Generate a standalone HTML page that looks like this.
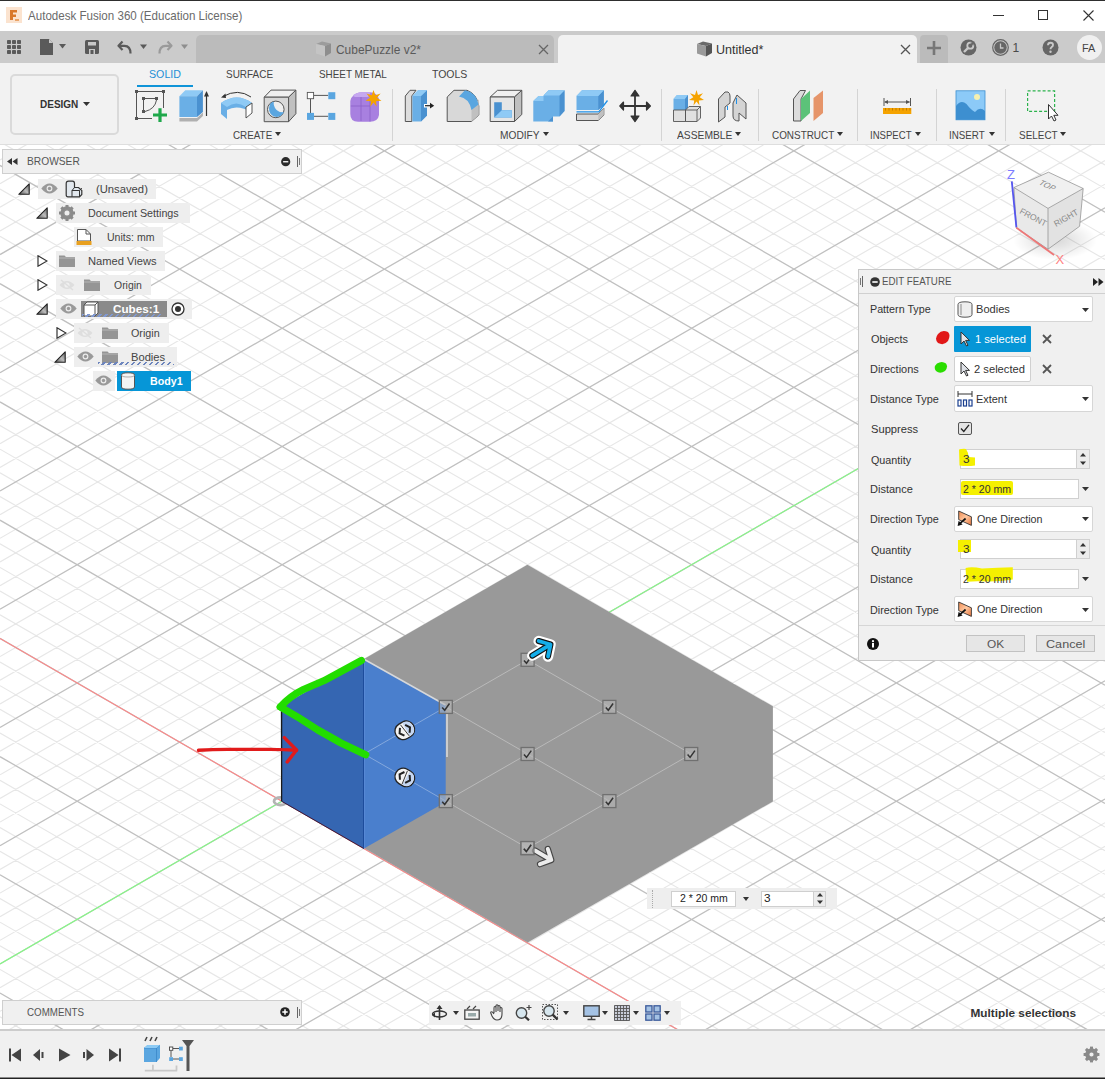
<!DOCTYPE html><html><head><meta charset="utf-8"><style>
*{box-sizing:border-box;margin:0;padding:0}
html,body{width:1105px;height:1079px;overflow:hidden;background:#fff;font-family:"Liberation Sans",sans-serif;color:#333}
.a{position:absolute}
#title{left:0;top:0;width:1105px;height:31px;background:#fff;border-top:1px solid #2b2b2b}
#tabbar{left:0;top:31px;width:1105px;height:32px;background:#c9c9c9}
#toolbar{left:0;top:63px;width:1105px;height:81px;background:#f2f2f2;border-bottom:1px solid #dcdcdc}
#vp{left:0;top:0;width:1105px;height:1079px}
#timeline{left:0;top:1029px;width:1105px;height:50px;background:#f0f0f0;border-top:2px solid #cfcfcf;border-bottom:2px solid #3a3a3a}
.txt{white-space:nowrap;line-height:1}
</style></head><body>
<svg class="a" style="left:0;top:0" width="1105" height="1079" viewBox="0 0 1105 1079"><rect x="0" y="144" width="1105" height="886" fill="#fff"/><path d="M0 112.68L1105 -525.28M0 159.98L1105 -477.99M0 183.63L1105 -454.34M0 207.27L1105 -430.69M0 230.92L1105 -407.04M0 278.22L1105 -359.75M0 301.87L1105 -336.10M0 325.51L1105 -312.45M0 349.16L1105 -288.80M0 396.46L1105 -241.51M0 420.11L1105 -217.86M0 443.75L1105 -194.21M0 467.40L1105 -170.56M0 514.70L1105 -123.27M0 538.35L1105 -99.62M0 561.99L1105 -75.97M0 585.64L1105 -52.32M0 632.94L1105 -5.03M0 656.59L1105 18.62M0 680.23L1105 42.27M0 703.88L1105 65.92M0 751.18L1105 113.21M0 774.83L1105 136.86M0 798.47L1105 160.51M0 822.12L1105 184.16M0 869.42L1105 231.45M0 893.07L1105 255.10M0 916.71L1105 278.75M0 940.36L1105 302.40M0 987.66L1105 349.69M0 1011.31L1105 373.34M0 1034.95L1105 396.99M0 1058.60L1105 420.64M0 1105.90L1105 467.93M0 1129.55L1105 491.58M0 1153.19L1105 515.23M0 1176.84L1105 538.88M0 1224.14L1105 586.17M0 1247.79L1105 609.82M0 1271.43L1105 633.47M0 1295.08L1105 657.12M0 1342.38L1105 704.41M0 1366.03L1105 728.06M0 1389.67L1105 751.71M0 1413.32L1105 775.36M0 1460.62L1105 822.65M0 1484.27L1105 846.30M0 1507.91L1105 869.95M0 1531.56L1105 893.60M0 1578.86L1105 940.89M0 1602.51L1105 964.54M0 1626.15L1105 988.19M0 1649.80L1105 1011.84M0 1697.10L1105 1059.13M0 -520.36L1105 117.60M0 -496.71L1105 141.25M0 -473.07L1105 164.90M0 -449.42L1105 188.55M0 -402.12L1105 235.84M0 -378.47L1105 259.49M0 -354.83L1105 283.14M0 -331.18L1105 306.79M0 -283.88L1105 354.08M0 -260.23L1105 377.73M0 -236.59L1105 401.38M0 -212.94L1105 425.03M0 -165.64L1105 472.32M0 -141.99L1105 495.97M0 -118.35L1105 519.62M0 -94.70L1105 543.27M0 -47.40L1105 590.56M0 -23.75L1105 614.21M0 -0.11L1105 637.86M0 23.54L1105 661.51M0 70.84L1105 708.80M0 94.49L1105 732.45M0 118.13L1105 756.10M0 141.78L1105 779.75M0 189.08L1105 827.04M0 212.73L1105 850.69M0 236.37L1105 874.34M0 260.02L1105 897.99M0 307.32L1105 945.28M0 330.97L1105 968.93M0 354.61L1105 992.58M0 378.26L1105 1016.23M0 425.56L1105 1063.52M0 449.21L1105 1087.17M0 472.85L1105 1110.82M0 496.50L1105 1134.47M0 543.80L1105 1181.76M0 567.45L1105 1205.41M0 591.09L1105 1229.06M0 614.74L1105 1252.71M0 662.04L1105 1300.00M0 685.69L1105 1323.65M0 709.33L1105 1347.30M0 732.98L1105 1370.95M0 780.28L1105 1418.24M0 803.93L1105 1441.89M0 827.57L1105 1465.54M0 851.22L1105 1489.19M0 898.52L1105 1536.48M0 922.17L1105 1560.13M0 945.81L1105 1583.78M0 969.46L1105 1607.43M0 1016.76L1105 1654.72M0 1040.41L1105 1678.37M0 1064.05L1105 1702.02" stroke="#e7e7e7" stroke-width="1.15" fill="none"/><path d="M0 136.33L1105 -501.63M0 254.57L1105 -383.39M0 372.81L1105 -265.15M0 491.05L1105 -146.91M0 609.29L1105 -28.67M0 727.53L1105 89.57M0 845.77L1105 207.81M0 964.01L1105 326.05M0 1082.25L1105 444.29M0 1200.49L1105 562.53M0 1318.73L1105 680.77M0 1436.97L1105 799.01M0 1555.21L1105 917.25M0 1673.45L1105 1035.49M0 -425.77L1105 212.19M0 -307.53L1105 330.43M0 -189.29L1105 448.67M0 -71.05L1105 566.91M0 47.19L1105 685.15M0 165.43L1105 803.39M0 283.67L1105 921.63M0 401.91L1105 1039.87M0 520.15L1105 1158.11M0 638.39L1105 1276.35M0 756.63L1105 1394.59M0 874.87L1105 1512.83M0 993.11L1105 1631.07" stroke="#c0c0c0" stroke-width="1.3" fill="none"/><path d="M0 638.40L1105 1276.36" stroke="#ff8585" stroke-width="1.05"/><path d="M0 964.00L1105 326.04" stroke="#86f886" stroke-width="1.1"/><ellipse cx="280.5" cy="801.2" rx="6.5" ry="3.8" fill="none" stroke="#b4b4b4" stroke-width="2.8"/><path d="M527.4 564.8L772.9 706.3L772.9 801.4L527.7 942.6L364 848L364 659Z" fill="#999999"/><path d="M280.8 706.3L364 658.8L364 848.6L281.2 801.2Z" fill="#3566b2"/><path d="M364 658.8L445.7 704.5L445.7 802L364 848.6Z" fill="#4a7fcd"/><path d="M281.6 707V801.2" stroke="#1a1a1a" stroke-width="1.3"/><path d="M281.6 801.2L364 848.6" stroke="#3a1a3a" stroke-width="1"/><path d="M363.5 658.8V848.6" stroke="#1d4c9c" stroke-width="1"/><path d="M364.6 659.5V848" stroke="#5a8cd8" stroke-width="0.8"/><path d="M364.5 659.5L445.5 705" stroke="#d8d8d8" stroke-width="1.6"/><path d="M447 713V757" stroke="#dedede" stroke-width="1.5"/><path d="M364.0 754.0L527.6 848.2M445.8 706.9L609.4 801.1M527.6 659.8L691.2 754.0M364.0 754.0L527.6 659.8M445.8 801.1L609.4 706.9M527.6 848.2L691.2 754.0" stroke="#ffffff" stroke-opacity="0.32" stroke-width="1"/><rect x="439.3" y="794.6" width="13" height="13" fill="#b8b8b8" fill-opacity="0.6" stroke="#707070" stroke-width="1.3"/><path d="M442.2 801.7l2.5 2.8l4.8-6.8" stroke="#333" stroke-width="1.5" fill="none"/><rect x="521.1" y="841.7" width="13" height="13" fill="#b8b8b8" fill-opacity="0.6" stroke="#707070" stroke-width="1.3"/><path d="M524.0 848.8l2.5 2.8l4.8-6.8" stroke="#333" stroke-width="1.5" fill="none"/><rect x="439.3" y="700.4" width="13" height="13" fill="#b8b8b8" fill-opacity="0.6" stroke="#707070" stroke-width="1.3"/><path d="M442.2 707.5l2.5 2.8l4.8-6.8" stroke="#333" stroke-width="1.5" fill="none"/><rect x="521.1" y="747.5" width="13" height="13" fill="#b8b8b8" fill-opacity="0.6" stroke="#707070" stroke-width="1.3"/><path d="M524.0 754.6l2.5 2.8l4.8-6.8" stroke="#333" stroke-width="1.5" fill="none"/><rect x="602.9" y="794.6" width="13" height="13" fill="#b8b8b8" fill-opacity="0.6" stroke="#707070" stroke-width="1.3"/><path d="M605.8 801.7l2.5 2.8l4.8-6.8" stroke="#333" stroke-width="1.5" fill="none"/><rect x="521.1" y="653.3" width="13" height="13" fill="#b8b8b8" fill-opacity="0.6" stroke="#707070" stroke-width="1.3"/><path d="M524.0 660.4l2.5 2.8l4.8-6.8" stroke="#333" stroke-width="1.5" fill="none"/><rect x="602.9" y="700.4" width="13" height="13" fill="#b8b8b8" fill-opacity="0.6" stroke="#707070" stroke-width="1.3"/><path d="M605.8 707.5l2.5 2.8l4.8-6.8" stroke="#333" stroke-width="1.5" fill="none"/><rect x="684.7" y="747.5" width="13" height="13" fill="#b8b8b8" fill-opacity="0.6" stroke="#707070" stroke-width="1.3"/><path d="M687.6 754.6l2.5 2.8l4.8-6.8" stroke="#333" stroke-width="1.5" fill="none"/><g transform="translate(404.8 730.3) rotate(-30)"><rect x="-10" y="-8.3" width="20" height="16.6" rx="8" fill="#f4f4f4" stroke="#222" stroke-width="1.3"/><path d="M1.5 -7.6H2Q9.2 -7.6 9.2 0Q9.2 7.6 2 7.6H1.5Z" fill="#c4d6f2"/><path d="M-3 -4.5L-6 0L-3 4.5M3 -4.5L6 0L3 4.5" stroke="#222" stroke-width="2" fill="none"/><path d="M-1 -7L1 7" stroke="#222" stroke-width="0.8"/></g><g transform="translate(404.8 777.4) rotate(30)"><rect x="-10" y="-8.3" width="20" height="16.6" rx="8" fill="#f4f4f4" stroke="#222" stroke-width="1.3"/><path d="M1.5 -7.6H2Q9.2 -7.6 9.2 0Q9.2 7.6 2 7.6H1.5Z" fill="#c4d6f2"/><path d="M-3 -4.5L-6 0L-3 4.5M3 -4.5L6 0L3 4.5" stroke="#222" stroke-width="2" fill="none"/><path d="M-1 -7L1 7" stroke="#222" stroke-width="0.8"/></g><path d="M532.3 655.6L550.2 644.6M538.7 641L550.5 644.5L548 656.5" stroke="#fff" stroke-width="10.5" fill="none" stroke-linecap="round" stroke-linejoin="round"/><path d="M532.3 655.6L550.2 644.6M538.7 641L550.5 644.5L548 656.5" stroke="#111" stroke-width="6" fill="none" stroke-linecap="round" stroke-linejoin="round"/><path d="M532.3 655.6L550.2 644.6M538.7 641L550.5 644.5L548 656.5" stroke="#14aeea" stroke-width="3.8" fill="none" stroke-linecap="round" stroke-linejoin="round"/><path d="M535 850.5L550.8 859.8M547.8 849L551.3 860L540 864.2" stroke="#444" stroke-width="6.2" fill="none" stroke-linecap="round" stroke-linejoin="round"/><path d="M535 850.5L550.8 859.8M547.8 849L551.3 860L540 864.2" stroke="#ececec" stroke-width="4" fill="none" stroke-linecap="round" stroke-linejoin="round"/><rect x="520.9" y="841.5" width="13" height="13" fill="#b8b8b8" fill-opacity="0.6" stroke="#707070" stroke-width="1.3"/><path d="M523.8 848.8l2.5 2.8l4.8-6.8" stroke="#333" stroke-width="1.5" fill="none"/><path d="M280.3 706.9Q290 696 303.4 689.5L323.7 680.8Q342 671 361.4 660.5" stroke="#22dd00" stroke-width="7.2" fill="none" stroke-linecap="round" stroke-linejoin="round"/><path d="M280.3 706.9Q300 718 317.9 730L341 743L365.7 754.7" stroke="#22dd00" stroke-width="7.2" fill="none" stroke-linecap="round" stroke-linejoin="round"/><path d="M198.5 750.3Q214 749.3 230 749.4L270 749.4Q285 749.6 296.5 750.3" stroke="#e11b1b" stroke-width="3.4" fill="none" stroke-linecap="round"/><path d="M284.3 737.6L296.5 750L287.2 762" stroke="#e11b1b" stroke-width="3.4" fill="none" stroke-linecap="round" stroke-linejoin="round"/><defs><radialGradient id="sh" cx="0.5" cy="0.5" r="0.5"><stop offset="0" stop-color="#000" stop-opacity="0.16"/><stop offset="1" stop-color="#000" stop-opacity="0"/></radialGradient></defs><ellipse cx="1055" cy="240" rx="42" ry="20" fill="url(#sh)"/><path d="M1013.9 187.5L1048.5 172.2L1083.2 188.5L1048 208.4Z" fill="#f0f0f0"/><path d="M1013.9 187.5L1048 208.4L1048 249.2L1016.4 227.8Z" fill="#e9e9e9"/><path d="M1048 208.4L1083.2 188.5L1079.6 226.3L1048 249.2Z" fill="#e2e2e2"/><path d="M1013.9 187.5L1048.5 172.2L1083.2 188.5L1048 208.4Z M1048 208.4V249.2M1013.9 187.5L1016.4 227.8L1048 249.2L1079.6 226.3L1083.2 188.5" stroke="#8a8a8a" stroke-width="0.7" fill="none"/><path d="M1011.8 181.4L1016.4 227.3" stroke="#5555ee" stroke-width="1.8"/><path d="M1016.4 227.8L1054.1 255" stroke="#ee7777" stroke-width="1.8"/><text x="1007" y="179" font-family="Liberation Sans" font-size="13" fill="#7b7bff">Z</text><text x="1055.5" y="264" font-family="Liberation Sans" font-size="13" fill="#ff8080">X</text><text x="0" y="0" font-family="Liberation Sans" font-size="8" fill="#8a8a8a" transform="translate(1038 184) rotate(25) skewX(-20)">TOP</text><text x="0" y="0" font-family="Liberation Sans" font-size="8.5" fill="#8a8a8a" transform="translate(1019 213) rotate(28)">FRONT</text><text x="0" y="0" font-family="Liberation Sans" font-size="8.5" fill="#8a8a8a" transform="translate(1056 227) rotate(-30)">RIGHT</text></svg><div class="a" style="left:647.2px;top:888.1px;width:189.7px;height:21.2px;background:#eeeeee"></div><div class="a" style="left:652px;top:890px;width:2px;height:18px;border-left:1px dotted #aaa"></div><div class="a" style="left:671.1px;top:890.5px;width:65.2px;height:16.1px;background:#fff;border:1px solid #cfcfcf"></div><div class="a txt" style="left:679.67px;top:893.00px;font-size:11.80px;color:#222;font-weight:400;transform:scaleX(0.8904);transform-origin:0 0;">2 * 20 mm</div><svg class="a" style="left:742.5px;top:897px" width="6" height="4" viewBox="0 0 6 4"><path d="M0 0H6L3 4Z" fill="#333"/></svg><div class="a" style="left:761.3px;top:890.5px;width:65.1px;height:16.1px;background:#fff;border:1px solid #cfcfcf"></div><div class="a" style="left:813.4px;top:890.5px;width:13px;height:16.1px;background:#ececec;border:1px solid #cfcfcf"></div><svg class="a" style="left:817px;top:892px" width="6" height="13" viewBox="0 0 6 13"><path d="M0 4.5H6L3 1Z M0 8.5H6L3 12Z" fill="#333"/></svg><div class="a txt" style="left:764.03px;top:893.00px;font-size:11.80px;color:#222;font-weight:400;">3</div>
<div class="a" style="left:0;top:0;width:1105px;height:31px;background:#fff"></div><div class="a" style="left:0;top:0;width:1105px;height:1px;background:#2e2e2e"></div><svg class="a" style="left:6px;top:7px" width="16" height="16" viewBox="0 0 16 16"><rect x="0" y="0" width="16" height="16" fill="#fbe3cf"/><path d="M4 3L11 3L11 5.5L7 5.5L7 7.5L10 7.5L10 10L7 10L7 13L4 13Z" fill="#d9782a"/><rect x="9" y="12" width="4" height="2" fill="#e9a46a"/></svg><div class="a txt" style="left:27.60px;top:10.00px;font-size:12.60px;color:#6a6a6a;font-weight:400;transform:scaleX(0.9193);transform-origin:0 0;">Autodesk Fusion 360 (Education License)</div><div class="a" style="left:993px;top:15px;width:11px;height:1px;background:#333"></div><div class="a" style="left:1038px;top:10px;width:10px;height:10px;border:1px solid #333"></div><svg class="a" style="left:1083px;top:10px" width="11" height="11" viewBox="0 0 11 11"><path d="M0.5 0.5L10.5 10.5M10.5 0.5L0.5 10.5" stroke="#333" stroke-width="1.1"/></svg><div class="a" style="left:0;top:31px;width:1105px;height:32px;background:#cbcbcb"></div><svg class="a" style="left:6px;top:39px" width="16" height="16" viewBox="0 0 16 16"><rect x="1" y="1" width="4" height="4" rx="0.8" fill="#5a5a5a"/><rect x="1" y="6" width="4" height="4" rx="0.8" fill="#5a5a5a"/><rect x="1" y="11" width="4" height="4" rx="0.8" fill="#5a5a5a"/><rect x="6" y="1" width="4" height="4" rx="0.8" fill="#5a5a5a"/><rect x="6" y="6" width="4" height="4" rx="0.8" fill="#5a5a5a"/><rect x="6" y="11" width="4" height="4" rx="0.8" fill="#5a5a5a"/><rect x="11" y="1" width="4" height="4" rx="0.8" fill="#5a5a5a"/><rect x="11" y="6" width="4" height="4" rx="0.8" fill="#5a5a5a"/><rect x="11" y="11" width="4" height="4" rx="0.8" fill="#5a5a5a"/></svg><svg class="a" style="left:39px;top:38px" width="30" height="18" viewBox="0 0 30 18"><path d="M1 1L10 1L14 5L14 17L1 17Z" fill="#5a5a5a"/><path d="M10 1L10 5L14 5" fill="#c9c9c9"/><path d="M20 6L27 6L23.5 10.5Z" fill="#5a5a5a"/></svg><svg class="a" style="left:85px;top:40px" width="14" height="14" viewBox="0 0 14 14"><path d="M0 1.5Q0 0 1.5 0L12.5 0Q14 0 14 1.5L14 12.5Q14 14 12.5 14L1.5 14Q0 14 0 12.5Z" fill="#5a5a5a"/><rect x="3" y="2" width="8" height="3.5" fill="#c9c9c9"/><rect x="4" y="9" width="6" height="5" fill="#c9c9c9"/><rect x="5.5" y="10" width="3" height="4" fill="#5a5a5a"/></svg><svg class="a" style="left:117px;top:40px" width="32" height="15" viewBox="0 0 32 15"><path d="M5.5 1.5L1.5 5.8L5.5 10" stroke="#5a5a5a" stroke-width="2.2" fill="none" stroke-linejoin="round"/><path d="M2 5.8H7.5Q13.5 5.8 13.5 13.5" stroke="#5a5a5a" stroke-width="2.2" fill="none"/><path d="M23 4.5L30 4.5L26.5 9Z" fill="#5a5a5a"/></svg><svg class="a" style="left:158px;top:40px" width="32" height="15" viewBox="0 0 32 15"><path d="M9.5 1.5L13.5 5.8L9.5 10" stroke="#9a9a9a" stroke-width="2.2" fill="none" stroke-linejoin="round"/><path d="M13 5.8H7.5Q1.5 5.8 1.5 13.5" stroke="#9a9a9a" stroke-width="2.2" fill="none"/><path d="M23 4.5L30 4.5L26.5 9Z" fill="#8e8e8e"/></svg><div class="a" style="left:196px;top:35px;width:358px;height:28px;background:#bbbbbb;border-radius:5px 5px 0 0"></div><svg class="a" style="left:315px;top:41px" width="17" height="16" viewBox="0 0 17 16"><path d="M1 3L7 0.5L16 2.5L10 5Z" fill="#9c9c9c"/><path d="M1 3L10 5L10 15.5L1 12.5Z" fill="#c4c4c4"/><path d="M10 5L16 2.5L16 12L10 15.5Z" fill="#8e8e8e"/></svg><div class="a txt" style="left:335.80px;top:44.00px;font-size:12.40px;color:#5a5a5a;font-weight:400;transform:scaleX(0.9632);transform-origin:0 0;">CubePuzzle v2*</div><svg class="a" style="left:538px;top:44px" width="11" height="11" viewBox="0 0 11 11"><path d="M1 1L10 10M10 1L1 10" stroke="#666" stroke-width="1.3"/></svg><div class="a" style="left:558px;top:35px;width:359px;height:28px;background:#f2f2f2;border-radius:5px 5px 0 0"></div><svg class="a" style="left:696px;top:41px" width="17" height="16" viewBox="0 0 17 16"><path d="M1 3L7 0.5L16 2.5L10 5Z" fill="#6a6a6a"/><path d="M1 3L10 5L10 15.5L1 12.5Z" fill="#9a9a9a"/><path d="M10 5L16 2.5L16 12L10 15.5Z" fill="#555"/></svg><div class="a txt" style="left:716.46px;top:44.00px;font-size:12.40px;color:#333;font-weight:400;transform:scaleX(1.0097);transform-origin:0 0;">Untitled*</div><svg class="a" style="left:900px;top:44px" width="11" height="11" viewBox="0 0 11 11"><path d="M1 1L10 10M10 1L1 10" stroke="#555" stroke-width="1.3"/></svg><div class="a" style="left:920px;top:35px;width:28px;height:28px;background:#bbbbbb;border-radius:4px 4px 0 0"></div><svg class="a" style="left:927px;top:41px" width="14" height="14" viewBox="0 0 14 14"><path d="M7 0V14M0 7H14" stroke="#777" stroke-width="2.6"/></svg><svg class="a" style="left:960px;top:39px" width="17" height="17" viewBox="0 0 17 17"><circle cx="8.5" cy="8.5" r="8" fill="#666"/><path d="M4 13L8.5 8.5" stroke="#c9c9c9" stroke-width="2.4"/><circle cx="10.3" cy="6.7" r="3" fill="none" stroke="#c9c9c9" stroke-width="1.8"/><path d="M10.3 3.7L13.3 6.7L14.5 2.5Z" fill="#666"/></svg><svg class="a" style="left:992px;top:39px" width="17" height="17" viewBox="0 0 17 17"><circle cx="8.5" cy="8.5" r="7.8" fill="none" stroke="#666" stroke-width="1.2"/><circle cx="8.5" cy="8.5" r="6.2" fill="#666"/><path d="M8.5 4.5V9H11.5" stroke="#c9c9c9" stroke-width="1.3" fill="none"/></svg><div class="a txt" style="left:1012.40px;top:42.00px;font-size:12.00px;color:#4a4a4a;font-weight:400;">1</div><svg class="a" style="left:1042px;top:39px" width="17" height="17" viewBox="0 0 17 17"><circle cx="8.5" cy="8.5" r="8" fill="#666"/><path d="M6 6.3Q6 3.8 8.5 3.8Q11 3.8 11 6Q11 7.4 9.5 8.2Q8.5 8.8 8.5 10.2" stroke="#c9c9c9" stroke-width="1.9" fill="none"/><circle cx="8.5" cy="12.8" r="1.2" fill="#c9c9c9"/></svg><div class="a" style="left:1077px;top:35px;width:25px;height:25px;border-radius:50%;background:#f0f0f0"></div><div class="a txt" style="left:1082.33px;top:43.00px;font-size:11.50px;color:#444;font-weight:400;transform:scaleX(0.9458);transform-origin:0 0;">FA</div><div class="a" style="left:0;top:63px;width:1105px;height:81px;background:#f2f2f2"></div><div class="a" style="left:0;top:144px;width:1105px;height:1px;background:#dedede"></div><div class="a" style="left:10px;top:73.5px;width:109px;height:61px;border:2px solid #dadada;border-radius:5px"></div><div class="a txt" style="left:39.95px;top:99.00px;font-size:11.50px;color:#333;font-weight:700;transform:scaleX(0.8696);transform-origin:0 0;">DESIGN</div><svg class="a" style="left:83px;top:101.5px" width="7" height="4" viewBox="0 0 7 4"><path d="M0 0H7L3.5 4Z" fill="#333"/></svg><div class="a txt" style="left:148.62px;top:69.00px;font-size:11.20px;color:#1c8fd6;font-weight:400;transform:scaleX(0.9512);transform-origin:0 0;">SOLID</div><div class="a" style="left:136.5px;top:84.6px;width:56px;height:2.6px;background:#0f94d8"></div><div class="a txt" style="left:225.95px;top:69.00px;font-size:11.20px;color:#444;font-weight:400;transform:scaleX(0.8900);transform-origin:0 0;">SURFACE</div><div class="a txt" style="left:318.95px;top:69.00px;font-size:11.20px;color:#444;font-weight:400;transform:scaleX(0.8850);transform-origin:0 0;">SHEET METAL</div><div class="a txt" style="left:431.59px;top:69.00px;font-size:11.20px;color:#444;font-weight:400;transform:scaleX(0.9374);transform-origin:0 0;">TOOLS</div><div class="a txt" style="left:233.01px;top:130.00px;font-size:11.00px;color:#444;font-weight:400;transform:scaleX(0.8951);transform-origin:0 0;">CREATE</div><svg class="a" style="left:275.0px;top:132px" width="6" height="4" viewBox="0 0 6 4"><path d="M0 0H6L3 4Z" fill="#333"/></svg><div class="a txt" style="left:500.39px;top:130.00px;font-size:11.00px;color:#444;font-weight:400;transform:scaleX(0.9247);transform-origin:0 0;">MODIFY</div><svg class="a" style="left:543.0px;top:132px" width="6" height="4" viewBox="0 0 6 4"><path d="M0 0H6L3 4Z" fill="#333"/></svg><div class="a txt" style="left:676.90px;top:130.00px;font-size:11.00px;color:#444;font-weight:400;transform:scaleX(0.9346);transform-origin:0 0;">ASSEMBLE</div><svg class="a" style="left:735.2px;top:132px" width="6" height="4" viewBox="0 0 6 4"><path d="M0 0H6L3 4Z" fill="#333"/></svg><div class="a txt" style="left:771.80px;top:130.00px;font-size:11.00px;color:#444;font-weight:400;transform:scaleX(0.9010);transform-origin:0 0;">CONSTRUCT</div><svg class="a" style="left:836.9px;top:132px" width="6" height="4" viewBox="0 0 6 4"><path d="M0 0H6L3 4Z" fill="#333"/></svg><div class="a txt" style="left:870.24px;top:130.00px;font-size:11.00px;color:#444;font-weight:400;transform:scaleX(0.8714);transform-origin:0 0;">INSPECT</div><svg class="a" style="left:915.4px;top:132px" width="6" height="4" viewBox="0 0 6 4"><path d="M0 0H6L3 4Z" fill="#333"/></svg><div class="a txt" style="left:949.32px;top:130.00px;font-size:11.00px;color:#444;font-weight:400;transform:scaleX(0.8885);transform-origin:0 0;">INSERT</div><svg class="a" style="left:988.6px;top:132px" width="6" height="4" viewBox="0 0 6 4"><path d="M0 0H6L3 4Z" fill="#333"/></svg><div class="a txt" style="left:1018.55px;top:130.00px;font-size:11.00px;color:#444;font-weight:400;transform:scaleX(0.9031);transform-origin:0 0;">SELECT</div><svg class="a" style="left:1060.0px;top:132px" width="6" height="4" viewBox="0 0 6 4"><path d="M0 0H6L3 4Z" fill="#333"/></svg><div class="a" style="left:392px;top:89px;width:1px;height:52px;background:#d4d4d4"></div><div class="a" style="left:661px;top:89px;width:1px;height:52px;background:#d4d4d4"></div><div class="a" style="left:758px;top:89px;width:1px;height:52px;background:#d4d4d4"></div><div class="a" style="left:857px;top:89px;width:1px;height:52px;background:#d4d4d4"></div><div class="a" style="left:936px;top:89px;width:1px;height:52px;background:#d4d4d4"></div><div class="a" style="left:1005px;top:89px;width:1px;height:52px;background:#d4d4d4"></div>
<svg class="a" style="left:0;top:0" width="1105" height="150" viewBox="0 0 1105 150"><g stroke="#555" stroke-width="1" fill="none"><path d="M137 91.5H163.5M136.5 92V118.5M137 118.5H152M163.5 92V108"/><path d="M144 98.5H156M143.5 99V111"/><path d="M156.5 100Q155 109 145 111.5"/></g><rect x="135.0" y="90.0" width="3" height="3" fill="#555"/><rect x="162.0" y="90.0" width="3" height="3" fill="#555"/><rect x="135.0" y="117.0" width="3" height="3" fill="#555"/><rect x="142.0" y="97.0" width="3" height="3" fill="#555"/><rect x="155.0" y="97.0" width="3" height="3" fill="#555"/><rect x="142.0" y="110.0" width="3" height="3" fill="#555"/><path d="M160 108.2V122M153 115H167" stroke="#1fa84b" stroke-width="3.2"/><path d="M179.4 96.2L185.3 90.3H202.9L197 96.2Z" fill="#8fcaf5"/><path d="M179.4 96.2H197V117H179.4Z" fill="#6aafe6"/><path d="M197 96.2L202.9 90.3V112L197 117Z" fill="#4a91d0"/><path d="M179.4 118H197L202.9 112.6V116L197 121.5H179.4Z" fill="#b0b0b0"/><path d="M206.5 93.5V116" stroke="#333" stroke-width="1.2"/><path d="M204 96.5L206.5 91L209 96.5Z" fill="#333"/><path d="M221 103Q237 92 252 103L252 112Q237 104 227 110L227 119L221 114Z" fill="#6aafe6"/><path d="M221 103Q237 92 252 103Q247 106 246 107Q236 100 227 107Z" fill="#8fcaf5"/><path d="M246 107L252 103V113L246 118Z" fill="#fff" stroke="#444" stroke-width="0.9"/><path d="M223 96.5Q238 88 251 97" stroke="#333" stroke-width="1" fill="none"/><path d="M221 97.5L225.5 93.5L226 98Z" fill="#333"/><path d="M264.2 97.2L271 90.1H295.9L288.6 97.2Z" fill="#f0f0f0" stroke="#555" stroke-width="1"/><path d="M264.2 97.2H288.6V121.7H264.2Z" fill="#d8d8d8" stroke="#555" stroke-width="1"/><path d="M288.6 97.2L295.9 90.1V113.7L288.6 121.7Z" fill="#c0c0c0" stroke="#555" stroke-width="1"/><circle cx="275.8" cy="109.4" r="8.3" fill="#eee" stroke="#555" stroke-width="1"/><path d="M270 104Q267 112 273 116Q280 119 284 112Q278 113 275 108Q273 104 274 101.5Q271 102 270 104Z" fill="#5aa6e0"/><circle cx="275.8" cy="109.4" r="7" fill="none" stroke="#5aa6e0" stroke-width="0"/><path d="M314 95.4H328M310.5 98.7V113M314 116.3H328" stroke="#555" stroke-width="1"/><rect x="307.3" y="92.4" width="6.3" height="6.3" fill="#fff" stroke="#555" stroke-width="0.9"/><rect x="328.3" y="92.2" width="7" height="7" fill="#5aa6e0"/><rect x="307.0" y="112.9" width="7" height="7" fill="#5aa6e0"/><rect x="328.3" y="112.9" width="7" height="7" fill="#5aa6e0"/><path d="M353 96Q356 92.3 362 92.3H370Q377 92.3 379 99V115Q378 121.7 370 121.7H358Q350.3 121.7 350.3 114V101Q350.3 98 353 96Z" fill="#a880e0"/><path d="M350.8 106H370M361 94V121M370 100V121.5" stroke="#8a5fc8" stroke-width="0.8"/><path d="M353 96Q356 92.3 362 92.3H371L368 97H355Z" fill="#c6a8f0"/><path d="M373.5 90L375.3 95.3L380.6 93.5L377 97.8L381.5 100.8L376 101.2L376.7 106.8L373.5 102.5L370.3 106.8L371 101.2L365.5 100.8L370 97.8L366.4 93.5L371.7 95.3Z" fill="#f5a300"/><path d="M405.3 96L410 90.3H416L411.8 96V121.5H405.3Z" fill="#ddd" stroke="#555" stroke-width="1"/><path d="M412.4 96L418 90.3H427V115.5L421 121.5H412.4Z" fill="#6aafe6"/><path d="M421 96L427 90.3V115.5L421 121.5Z" fill="#4a91d0"/><path d="M412.4 96L418 90.3H427L421 96Z" fill="#8fcaf5"/><rect x="424" y="104" width="3" height="3.5" fill="#fff"/><path d="M425 105.7H431" stroke="#222" stroke-width="1.2"/><path d="M430 102.8L434.2 105.7L430 108.6Z" fill="#222"/><path d="M447.2 97L454 90.3H467Q477 94 478.8 106V115L471.5 121.5H447.2Z" fill="#d8d8d8" stroke="#555" stroke-width="1"/><path d="M471.5 105.5L478.8 99.5V115L471.5 121.5Z" fill="#c0c0c0"/><path d="M459 96.5L465 90.3Q476 92 478.5 104.5L471.5 110Q469 98 459 96.5Z" fill="#5aa6e0"/><path d="M490.2 97L497.5 90.3H521.8L514.5 97Z" fill="#f0f0f0" stroke="#555" stroke-width="1"/><path d="M490.2 97H514.5V121.5H490.2Z" fill="#e6e6e6" stroke="#555" stroke-width="1"/><path d="M514.5 97L521.8 90.3V114.5L514.5 121.5Z" fill="#c0c0c0" stroke="#555" stroke-width="1"/><path d="M494.2 102.2H501.8V110.2H511.8V117.5H494.2Z" fill="#4a91d0"/><path d="M494.2 117.5L501.8 110.2H511.8V117.5Z" fill="#8fcaf5"/><path d="M543.5 95.5L548.5 90.3H564.5V111L559.5 116.5H553V121.5H533.3V101L538.5 96H543.5Z" fill="#6aafe6"/><path d="M559.5 95.5L564.5 90.3V111L559.5 116.5Z" fill="#4a91d0"/><path d="M543.5 95.5L548.5 90.3H564.5L559.5 95.5Z" fill="#8fcaf5"/><path d="M533.3 101L538.5 96H543.5V101Z" fill="#8fcaf5"/><path d="M553 116.5L548 121.5H553Z" fill="#4a91d0"/><path d="M576.5 96L582 90.3H603.8V105L598.3 110H576.5Z" fill="#6aafe6"/><path d="M598.3 96L603.8 90.3V105L598.3 110Z" fill="#4a91d0"/><path d="M576.5 96L582 90.3H603.8L598.3 96Z" fill="#8fcaf5"/><path d="M576.5 111.8H598.8L607.5 100.5" stroke="#1e90e8" stroke-width="1.3" fill="none"/><path d="M576.5 114H598.3L603.8 108.5V115L598.3 120.5H576.5Z" fill="#d8d8d8" stroke="#555" stroke-width="1"/><path d="M598.3 114L603.8 108.5V115L598.3 120.5Z" fill="#c0c0c0"/><path d="M635 93V119M622.5 106H648" stroke="#333" stroke-width="1.8"/><path d="M631 96L635 90.3L639 96Z M631 116L635 121.6L639 116Z M623.5 102L619.8 106L623.5 110Z M646.5 102L650.4 106L646.5 110Z" fill="#333" stroke="#333" stroke-width="1.2" stroke-linejoin="round"/><path d="M673.5 99L677 95H688L688 110H673.5Z" fill="#6aafe6"/><path d="M673.5 99L677 95H688L685 99Z" fill="#8fcaf5"/><path d="M685 99L688 95V110L685 110Z" fill="#4a91d0"/><path d="M673.5 110H685.5V121.5H673.5Z M685.5 110L689 106.5H700.5L700.5 118L697 121.5H685.5Z" fill="#e0e0e0" stroke="#555" stroke-width="0.9"/><path d="M685.5 110H697V121.5M697 110L700.5 106.5" stroke="#555" stroke-width="0.9" fill="none"/><path d="M696.5 90L698 95L703 93.3L699.7 97.2L704 100L698.8 100.5L699.5 105.6L696.5 101.5L693.5 105.6L694.2 100.5L689 100L693.3 97.2L690 93.3L695 95Z" fill="#f5a300"/><path d="M718.5 99L725 92H728Q730 93 730 96V103L725 107V117L718.5 122Z" fill="#d4d4d4" stroke="#555" stroke-width="1"/><path d="M733 103L737 95L746 103V119L739 113V121Q733 121 733 116Z" fill="#d4d4d4" stroke="#555" stroke-width="1"/><path d="M727.5 106V110M736.5 98V104" stroke="#1e90e8" stroke-width="1"/><path d="M793.5 99L800 90.5H805.5L801 99V121H793.5Z" fill="#dcdcdc" stroke="#555" stroke-width="1"/><path d="M801 99L810 90.5V113L801 121Z" fill="#5cc279"/><path d="M813.5 98L823 90.5V113L813.5 121Z" fill="#e6956a"/><path d="M884 98V106M910.5 98V106M885 102H909.5" stroke="#555" stroke-width="1"/><path d="M884 102L888 100V104Z M910 102L906 100V104Z" fill="#555"/><rect x="883" y="108" width="28.3" height="6" fill="#f5a300"/><path d="M885.5 108V110.5" stroke="#b06a00" stroke-width="0.7"/><path d="M889.0 108V110.5" stroke="#b06a00" stroke-width="0.7"/><path d="M892.5 108V110.5" stroke="#b06a00" stroke-width="0.7"/><path d="M896.0 108V110.5" stroke="#b06a00" stroke-width="0.7"/><path d="M899.5 108V110.5" stroke="#b06a00" stroke-width="0.7"/><path d="M903.0 108V110.5" stroke="#b06a00" stroke-width="0.7"/><path d="M906.5 108V110.5" stroke="#b06a00" stroke-width="0.7"/><path d="M910.0 108V110.5" stroke="#b06a00" stroke-width="0.7"/><rect x="956" y="90.8" width="29" height="29" fill="#8ccaf8" stroke="#3d8fd0" stroke-width="0.8"/><path d="M956 106Q961 99 966.5 104Q971 110 975 112Q980 106 985 111V119.8H956Z" fill="#3d8fd0"/><circle cx="977" cy="97" r="3" fill="#f5f0b0"/><rect x="1027.6" y="90.9" width="27" height="20.5" fill="none" stroke="#2bb24c" stroke-width="1.2" stroke-dasharray="3 2"/><path d="M1048.5 104.5V119L1051.5 116L1054 121L1056 120L1053.8 115.3H1058Z" fill="#fff" stroke="#333" stroke-width="1" stroke-linejoin="round"/></svg>
<div class="a" style="left:2px;top:149px;width:300px;height:25px;background:#f0f0f0;border:1px solid #cfcfcf"></div><svg class="a" style="left:7px;top:158px" width="11" height="7" viewBox="0 0 11 7"><path d="M0 3.5L5 0V7Z M5.5 3.5L10.5 0V7Z" fill="#333"/></svg><div class="a txt" style="left:26.78px;top:155.00px;font-size:11.60px;color:#555;font-weight:400;transform:scaleX(0.8809);transform-origin:0 0;">BROWSER</div><svg class="a" style="left:280.7px;top:156.8px" width="10" height="10" viewBox="0 0 10 10"><circle cx="4.7" cy="4.7" r="4.6" fill="#2a2a2a"/><rect x="2.1" y="4.1" width="5.2" height="1.3" fill="#fff"/></svg><div class="a" style="left:297px;top:156px;width:1px;height:11px;background:#666"></div><div class="a" style="left:299px;top:158px;width:1px;height:7px;background:#777"></div><div class="a" style="left:37.9px;top:179px;width:118.6px;height:20px;background:#eeeeee"></div><div class="a" style="left:56.1px;top:203px;width:133.8px;height:20px;background:#eeeeee"></div><div class="a" style="left:74.3px;top:227px;width:89.2px;height:20px;background:#eeeeee"></div><div class="a" style="left:56.1px;top:251px;width:109.4px;height:20px;background:#eeeeee"></div><div class="a" style="left:56.1px;top:275px;width:94.5px;height:20px;background:#eeeeee"></div><div class="a" style="left:56.1px;top:299px;width:135.5px;height:20px;background:#eeeeee"></div><div class="a" style="left:74.3px;top:323px;width:94.6px;height:20px;background:#eeeeee"></div><div class="a" style="left:74.3px;top:347px;width:102.4px;height:20px;background:#eeeeee"></div><div class="a" style="left:92.6px;top:371px;width:22.4px;height:20px;background:#eeeeee"></div><svg class="a" style="left:18.0px;top:182.5px" width="12" height="12" viewBox="0 0 12 12"><defs><linearGradient id="tg" x1="0" y1="1" x2="1" y2="0"><stop offset="0" stop-color="#555"/><stop offset="0.5" stop-color="#bbb"/><stop offset="1" stop-color="#666"/></linearGradient></defs><path d="M0.8 11.3L11.2 0.8L11.2 11.3Z" fill="url(#tg)" stroke="#222" stroke-width="1.1" stroke-linejoin="round"/></svg><svg class="a" style="left:40.7px;top:183.0px" width="17" height="11" viewBox="0 0 17 11"><path d="M0.3 5.5Q8.5 -4.5 16.7 5.5Q8.5 15.5 0.3 5.5Z" fill="#999"/><circle cx="8.5" cy="5.5" r="2.9" fill="#ececec"/><circle cx="8.5" cy="5.5" r="1.7" fill="#999"/></svg><svg class="a" style="left:65px;top:180px" width="18" height="18" viewBox="0 0 18 18"><path d="M1.2 3.5Q1.2 1.2 3.5 1.2H7.5Q9.5 1.2 9.5 3.5V7.5H13.5L16.8 10.5V14.5L14.5 16.8H3Q1.2 16.8 1.2 15Z" fill="#e2e8ee" stroke="#333" stroke-width="1.2"/><path d="M9.5 7.5L7 10.5V16.8M7 10.5H14.5V16.8M14.5 10.5L16.8 8" stroke="#333" stroke-width="1" fill="none"/></svg><div class="a txt" style="left:95.53px;top:184.00px;font-size:11.80px;color:#444;font-weight:400;transform:scaleX(0.9532);transform-origin:0 0;">(Unsaved)</div><svg class="a" style="left:36.0px;top:206.5px" width="12" height="12" viewBox="0 0 12 12"><defs><linearGradient id="tg" x1="0" y1="1" x2="1" y2="0"><stop offset="0" stop-color="#555"/><stop offset="0.5" stop-color="#bbb"/><stop offset="1" stop-color="#666"/></linearGradient></defs><path d="M0.8 11.3L11.2 0.8L11.2 11.3Z" fill="url(#tg)" stroke="#222" stroke-width="1.1" stroke-linejoin="round"/></svg><svg class="a" style="left:59px;top:205px" width="16" height="16" viewBox="0 0 16 16"><circle cx="8" cy="8" r="4.6" fill="none" stroke="#8e8e8e" stroke-width="4.2"/><rect x="6.5" y="0" width="3" height="4" fill="#8a8a8a" transform="rotate(0 8 8)"/><rect x="6.5" y="0" width="3" height="4" fill="#8a8a8a" transform="rotate(45 8 8)"/><rect x="6.5" y="0" width="3" height="4" fill="#8a8a8a" transform="rotate(90 8 8)"/><rect x="6.5" y="0" width="3" height="4" fill="#8a8a8a" transform="rotate(135 8 8)"/><rect x="6.5" y="0" width="3" height="4" fill="#8a8a8a" transform="rotate(180 8 8)"/><rect x="6.5" y="0" width="3" height="4" fill="#8a8a8a" transform="rotate(225 8 8)"/><rect x="6.5" y="0" width="3" height="4" fill="#8a8a8a" transform="rotate(270 8 8)"/><rect x="6.5" y="0" width="3" height="4" fill="#8a8a8a" transform="rotate(315 8 8)"/></svg><div class="a txt" style="left:88.34px;top:208.00px;font-size:11.80px;color:#444;font-weight:400;transform:scaleX(0.9100);transform-origin:0 0;">Document Settings</div><svg class="a" style="left:76px;top:229px" width="16" height="16" viewBox="0 0 16 16"><path d="M1.5 0.5H10L14.5 5V12H1.5Z" fill="#fff" stroke="#555" stroke-width="1"/><path d="M10 0.5V5H14.5" fill="none" stroke="#555" stroke-width="1"/><rect x="0.5" y="12" width="15" height="4" fill="#e8a020"/></svg><div class="a txt" style="left:106.61px;top:232.00px;font-size:11.80px;color:#444;font-weight:400;transform:scaleX(0.8941);transform-origin:0 0;">Units: mm</div><svg class="a" style="left:37.3px;top:254.5px" width="11" height="12" viewBox="0 0 11 12"><path d="M1 0.8L10 6L1 11.2Z" fill="#fff" stroke="#333" stroke-width="1.2"/></svg><svg class="a" style="left:59.0px;top:255.0px" width="16" height="12" viewBox="0 0 16 12"><path d="M0 0.5H5.5L7 2H16V12H0Z" fill="#959595"/><path d="M0 3H16" stroke="#c0c0c0" stroke-width="0.8"/></svg><div class="a txt" style="left:88.31px;top:256.00px;font-size:11.80px;color:#444;font-weight:400;transform:scaleX(0.9451);transform-origin:0 0;">Named Views</div><svg class="a" style="left:37.3px;top:278.5px" width="11" height="12" viewBox="0 0 11 12"><path d="M1 0.8L10 6L1 11.2Z" fill="#fff" stroke="#333" stroke-width="1.2"/></svg><svg class="a" style="left:59.0px;top:279.0px" width="16" height="12" viewBox="0 0 16 12"><path d="M0.5 6Q8 -2 15.5 6Q8 14 0.5 6Z" fill="#dedede"/><circle cx="8" cy="6" r="2.6" fill="#f0f0f0"/><path d="M2 1L14 11" stroke="#dedede" stroke-width="1.5"/></svg><svg class="a" style="left:83.6px;top:279.0px" width="16" height="12" viewBox="0 0 16 12"><path d="M0 0.5H5.5L7 2H16V12H0Z" fill="#959595"/><path d="M0 3H16" stroke="#c0c0c0" stroke-width="0.8"/></svg><div class="a txt" style="left:113.93px;top:280.00px;font-size:11.80px;color:#444;font-weight:400;transform:scaleX(0.8856);transform-origin:0 0;">Origin</div><svg class="a" style="left:36.0px;top:302.5px" width="12" height="12" viewBox="0 0 12 12"><defs><linearGradient id="tg" x1="0" y1="1" x2="1" y2="0"><stop offset="0" stop-color="#555"/><stop offset="0.5" stop-color="#bbb"/><stop offset="1" stop-color="#666"/></linearGradient></defs><path d="M0.8 11.3L11.2 0.8L11.2 11.3Z" fill="url(#tg)" stroke="#222" stroke-width="1.1" stroke-linejoin="round"/></svg><svg class="a" style="left:59.8px;top:303.0px" width="17" height="11" viewBox="0 0 17 11"><path d="M0.3 5.5Q8.5 -4.5 16.7 5.5Q8.5 15.5 0.3 5.5Z" fill="#999"/><circle cx="8.5" cy="5.5" r="2.9" fill="#ececec"/><circle cx="8.5" cy="5.5" r="1.7" fill="#999"/></svg><div class="a" style="left:81.3px;top:301px;width:85.6px;height:15.7px;background:#8a8a8a"></div><svg class="a" style="left:83px;top:301px" width="17" height="16" viewBox="0 0 17 16"><path d="M1 4L4 1H15V12L12 15H1Z" fill="#fff" stroke="#555" stroke-width="1"/><path d="M1 4H12V15M12 4L15 1" fill="none" stroke="#555" stroke-width="1"/></svg><div class="a txt" style="left:113.13px;top:304.00px;font-size:11.80px;color:#fff;font-weight:700;transform:scaleX(0.9916);transform-origin:0 0;">Cubes:1</div><div class="a" style="left:82px;top:314px;width:81px;height:3px;background:repeating-linear-gradient(135deg,#8098d0 0 1.6px,transparent 1.6px 4.2px)"></div><svg class="a" style="left:171px;top:302px" width="14" height="14" viewBox="0 0 14 14"><circle cx="7" cy="7" r="6" fill="#fff" stroke="#333" stroke-width="1.3"/><circle cx="7" cy="7" r="3" fill="#333"/></svg><svg class="a" style="left:56.1px;top:326.5px" width="11" height="12" viewBox="0 0 11 12"><path d="M1 0.8L10 6L1 11.2Z" fill="#fff" stroke="#333" stroke-width="1.2"/></svg><svg class="a" style="left:77.0px;top:327.0px" width="16" height="12" viewBox="0 0 16 12"><path d="M0.5 6Q8 -2 15.5 6Q8 14 0.5 6Z" fill="#dedede"/><circle cx="8" cy="6" r="2.6" fill="#f0f0f0"/><path d="M2 1L14 11" stroke="#dedede" stroke-width="1.5"/></svg><svg class="a" style="left:101.8px;top:327.0px" width="16" height="12" viewBox="0 0 16 12"><path d="M0 0.5H5.5L7 2H16V12H0Z" fill="#959595"/><path d="M0 3H16" stroke="#c0c0c0" stroke-width="0.8"/></svg><div class="a txt" style="left:131.32px;top:328.00px;font-size:11.80px;color:#444;font-weight:400;transform:scaleX(0.9121);transform-origin:0 0;">Origin</div><svg class="a" style="left:54.2px;top:350.5px" width="12" height="12" viewBox="0 0 12 12"><defs><linearGradient id="tg" x1="0" y1="1" x2="1" y2="0"><stop offset="0" stop-color="#555"/><stop offset="0.5" stop-color="#bbb"/><stop offset="1" stop-color="#666"/></linearGradient></defs><path d="M0.8 11.3L11.2 0.8L11.2 11.3Z" fill="url(#tg)" stroke="#222" stroke-width="1.1" stroke-linejoin="round"/></svg><svg class="a" style="left:76.5px;top:351.0px" width="17" height="11" viewBox="0 0 17 11"><path d="M0.3 5.5Q8.5 -4.5 16.7 5.5Q8.5 15.5 0.3 5.5Z" fill="#999"/><circle cx="8.5" cy="5.5" r="2.9" fill="#ececec"/><circle cx="8.5" cy="5.5" r="1.7" fill="#999"/></svg><svg class="a" style="left:101.8px;top:351.0px" width="16" height="12" viewBox="0 0 16 12"><path d="M0 0.5H5.5L7 2H16V12H0Z" fill="#959595"/><path d="M0 3H16" stroke="#c0c0c0" stroke-width="0.8"/></svg><div class="a txt" style="left:130.91px;top:352.00px;font-size:11.80px;color:#444;font-weight:400;transform:scaleX(0.9467);transform-origin:0 0;">Bodies</div><div class="a" style="left:98px;top:361.5px;width:76px;height:3px;background:repeating-linear-gradient(135deg,#6e86be 0 1.6px,transparent 1.6px 4.2px)"></div><svg class="a" style="left:94.5px;top:375.0px" width="17" height="11" viewBox="0 0 17 11"><path d="M0.3 5.5Q8.5 -4.5 16.7 5.5Q8.5 15.5 0.3 5.5Z" fill="#999"/><circle cx="8.5" cy="5.5" r="2.9" fill="#ececec"/><circle cx="8.5" cy="5.5" r="1.7" fill="#999"/></svg><div class="a" style="left:117.3px;top:371px;width:73.4px;height:20px;background:#0696d7"></div><svg class="a" style="left:120px;top:372px" width="16" height="18" viewBox="0 0 16 18"><path d="M1.5 3Q1.5 0.8 8 0.8Q14.5 0.8 14.5 3V15Q14.5 17.2 8 17.2Q1.5 17.2 1.5 15Z" fill="#f4f4f4" stroke="#555" stroke-width="1"/><path d="M1.5 3Q1.5 5 8 5Q14.5 5 14.5 3" fill="none" stroke="#999" stroke-width="0.8"/></svg><div class="a txt" style="left:149.91px;top:376.00px;font-size:11.80px;color:#fff;font-weight:700;transform:scaleX(0.9061);transform-origin:0 0;">Body1</div>
<div class="a" style="left:858px;top:269px;width:250px;height:392px;background:#f0f0f0;border:1px solid #c8c8c8"></div><div class="a" style="left:859px;top:293px;width:246px;height:1px;background:#d0d0d0"></div><div class="a" style="left:860px;top:278px;width:1px;height:7px;background:#777"></div><div class="a" style="left:862px;top:276px;width:1px;height:11px;background:#666"></div><svg class="a" style="left:869.5px;top:276.5px" width="10" height="10" viewBox="0 0 10 10"><circle cx="5" cy="5" r="4.8" fill="#333"/><rect x="2.3" y="4.2" width="5.4" height="1.6" fill="#fff"/></svg><div class="a txt" style="left:882.22px;top:276.00px;font-size:11.40px;color:#555;font-weight:400;transform:scaleX(0.8547);transform-origin:0 0;">EDIT FEATURE</div><svg class="a" style="left:1092.5px;top:277.5px" width="11" height="8" viewBox="0 0 11 8"><path d="M0 0L5 4L0 8Z M5.5 0L10.5 4L5.5 8Z" fill="#222"/></svg><div class="a txt" style="left:870.44px;top:304.00px;font-size:11.80px;color:#333;font-weight:400;transform:scaleX(0.9096);transform-origin:0 0;">Pattern Type</div><div class="a" style="left:953.8px;top:296.4px;width:139.4px;height:25.8px;background:#fff;border:1px solid #d6d6d6;border-radius:2px"></div><svg class="a" style="left:957px;top:301px" width="16" height="17" viewBox="0 0 16 17"><path d="M1 3.5Q1 0.8 8 0.8Q15 0.8 15 3.5V13.5Q15 16.2 8 16.2Q1 16.2 1 13.5Z" fill="#eee" stroke="#555" stroke-width="1"/><path d="M4 3V14" stroke="#bbb" stroke-width="2"/></svg><div class="a txt" style="left:976.21px;top:304.00px;font-size:11.80px;color:#333;font-weight:400;transform:scaleX(0.9381);transform-origin:0 0;">Bodies</div><svg class="a" style="left:1081.5px;top:307.5px" width="7" height="4" viewBox="0 0 7 4"><path d="M0 0H7L3.5 4Z" fill="#333"/></svg><div class="a txt" style="left:870.81px;top:334.00px;font-size:11.80px;color:#333;font-weight:400;transform:scaleX(0.9268);transform-origin:0 0;">Objects</div><svg class="a" style="left:935px;top:330px" width="16" height="16" viewBox="0 0 16 16"><path d="M3 13Q-1 9 3 4Q7 -1 13 2Q16 5 13 11Q9 16 3 13Z" fill="#e11818"/></svg><div class="a" style="left:953.8px;top:326px;width:77.6px;height:26.2px;background:#0696d7;border-radius:1px"></div><svg class="a" style="left:959.5px;top:331.0px" width="10" height="16" viewBox="0 0 10 16"><path d="M1 1V13L4 10L6.5 15L8 14.3L5.6 9.4H9.5Z" fill="#e4e6ea" stroke="#333" stroke-width="1"/></svg><div class="a txt" style="left:975.06px;top:334.00px;font-size:11.80px;color:#fff;font-weight:400;transform:scaleX(0.9452);transform-origin:0 0;">1 selected</div><svg class="a" style="left:1042.0px;top:334.2px" width="10" height="10" viewBox="0 0 10 10"><path d="M1 1L9 9M9 1L1 9" stroke="#555" stroke-width="1.8"/></svg><div class="a txt" style="left:870.42px;top:364.00px;font-size:11.80px;color:#333;font-weight:400;transform:scaleX(0.9297);transform-origin:0 0;">Directions</div><svg class="a" style="left:933.5px;top:360.5px" width="14" height="13" viewBox="0 0 14 13"><path d="M2 10Q-1 6 3 2.5Q8 -0.5 12 2.5Q14.5 6 11 10Q6 13.5 2 10Z" fill="#2add00"/></svg><div class="a" style="left:953.8px;top:356px;width:77.6px;height:26.2px;background:#fff;border:1px solid #d0d0d0;border-radius:2px"></div><svg class="a" style="left:959.5px;top:361.0px" width="10" height="16" viewBox="0 0 10 16"><path d="M1 1V13L4 10L6.5 15L8 14.3L5.6 9.4H9.5Z" fill="#dde0e6" stroke="#333" stroke-width="1"/></svg><div class="a txt" style="left:974.44px;top:364.00px;font-size:11.80px;color:#333;font-weight:400;transform:scaleX(0.9476);transform-origin:0 0;">2 selected</div><svg class="a" style="left:1042.0px;top:364.2px" width="10" height="10" viewBox="0 0 10 10"><path d="M1 1L9 9M9 1L1 9" stroke="#555" stroke-width="1.8"/></svg><div class="a txt" style="left:870.43px;top:394.00px;font-size:11.80px;color:#333;font-weight:400;transform:scaleX(0.9241);transform-origin:0 0;">Distance Type</div><div class="a" style="left:953.8px;top:385.2px;width:139.4px;height:26.8px;background:#fff;border:1px solid #d6d6d6;border-radius:2px"></div><svg class="a" style="left:957px;top:391px" width="16" height="16" viewBox="0 0 16 16"><path d="M1 0V6M15 0V6M1 3H15" stroke="#333" stroke-width="1" fill="none"/><rect x="1" y="9" width="3" height="6" fill="none" stroke="#1a3f8f" stroke-width="1.2"/><rect x="6.5" y="9" width="3" height="6" fill="none" stroke="#1a3f8f" stroke-width="1.2"/><rect x="12" y="9" width="3" height="6" fill="none" stroke="#1a3f8f" stroke-width="1.2"/></svg><div class="a txt" style="left:976.13px;top:394.00px;font-size:11.80px;color:#333;font-weight:400;transform:scaleX(0.9262);transform-origin:0 0;">Extent</div><svg class="a" style="left:1081.5px;top:397.0px" width="7" height="4" viewBox="0 0 7 4"><path d="M0 0H7L3.5 4Z" fill="#333"/></svg><div class="a txt" style="left:870.80px;top:424.00px;font-size:11.80px;color:#333;font-weight:400;transform:scaleX(0.9466);transform-origin:0 0;">Suppress</div><div class="a" style="left:958.3px;top:422px;width:13.5px;height:12.8px;background:#e4e4e4;border:1px solid #555;border-radius:2px"></div><svg class="a" style="left:960px;top:424px" width="10" height="9" viewBox="0 0 10 9"><path d="M1 4.5L3.8 7.5L9 0.8" stroke="#222" stroke-width="1.3" fill="none"/></svg><div class="a txt" style="left:870.82px;top:455.00px;font-size:11.80px;color:#333;font-weight:400;transform:scaleX(0.9119);transform-origin:0 0;">Quantity</div><div class="a" style="left:960.2px;top:448.5px;width:117.6px;height:20px;background:#fff;border:1px solid #d0d0d0"></div><div class="a" style="left:1076px;top:448.5px;width:13.8px;height:20px;background:#ececec;border:1px solid #d0d0d0"></div><svg class="a" style="left:1080px;top:451.5px" width="6" height="14" viewBox="0 0 6 14"><path d="M0 4.5H6L3 1Z M0 9.5H6L3 13Z" fill="#333"/></svg><svg class="a" style="left:958px;top:447.5px" width="18" height="19" viewBox="0 0 18 19"><path d="M1 1.5Q5 0.5 8 1L10 5L10.5 9L17 9.5L17 17.5Q9 18.5 1.5 17.5Z" fill="#f5f000"/></svg><div class="a txt" style="left:962.93px;top:454.00px;font-size:11.80px;color:#333;font-weight:400;">3</div><div class="a txt" style="left:870.42px;top:484.00px;font-size:11.80px;color:#333;font-weight:400;transform:scaleX(0.9341);transform-origin:0 0;">Distance</div><div class="a" style="left:960.2px;top:478.6px;width:119.3px;height:20px;background:#fff;border:1px solid #d0d0d0"></div><svg class="a" style="left:1081.9px;top:487.1px" width="7" height="4" viewBox="0 0 7 4"><path d="M0 0H7L3.5 4Z" fill="#333"/></svg><div class="a" style="left:961px;top:481px;width:51.8px;height:14px;background:#f5f000;border-radius:2px"></div><div class="a txt" style="left:962.87px;top:484.00px;font-size:11.80px;color:#333;font-weight:400;transform:scaleX(0.8942);transform-origin:0 0;">2 * 20 mm</div><div class="a txt" style="left:870.44px;top:514.00px;font-size:11.80px;color:#333;font-weight:400;transform:scaleX(0.9153);transform-origin:0 0;">Direction Type</div><div class="a" style="left:953.7px;top:505.9px;width:139.3px;height:25.7px;background:#fff;border:1px solid #d6d6d6;border-radius:2px"></div><svg class="a" style="left:957px;top:510.4px" width="16" height="17" viewBox="0 0 16 17"><defs><linearGradient id="og" x1="0" y1="0" x2="1" y2="1"><stop offset="0" stop-color="#f08a50"/><stop offset="0.5" stop-color="#ffc8a0"/><stop offset="1" stop-color="#e8733a"/></linearGradient></defs><path d="M1.7 1L14.4 6.8V15.4L1.7 9.6Z" fill="url(#og)" stroke="#333" stroke-width="0.9"/><path d="M8.6 8.5L2.2 14.2" stroke="#111" stroke-width="1.7"/><path d="M0.6 16L1.6 10.8L5.6 14.6Z" fill="#111"/></svg><div class="a txt" style="left:976.82px;top:514.00px;font-size:11.80px;color:#333;font-weight:400;transform:scaleX(0.9088);transform-origin:0 0;">One Direction</div><svg class="a" style="left:1081.5px;top:517.4px" width="7" height="4" viewBox="0 0 7 4"><path d="M0 0H7L3.5 4Z" fill="#333"/></svg><div class="a txt" style="left:870.82px;top:545.00px;font-size:11.80px;color:#333;font-weight:400;transform:scaleX(0.9119);transform-origin:0 0;">Quantity</div><div class="a" style="left:960.2px;top:538.9px;width:117.6px;height:20px;background:#fff;border:1px solid #d0d0d0"></div><div class="a" style="left:1076px;top:538.9px;width:13.8px;height:20px;background:#ececec;border:1px solid #d0d0d0"></div><svg class="a" style="left:1080px;top:541.9px" width="6" height="14" viewBox="0 0 6 14"><path d="M0 4.5H6L3 1Z M0 9.5H6L3 13Z" fill="#333"/></svg><div class="a" style="left:957.9px;top:540px;width:12.9px;height:11.5px;background:#f5f000"></div><div class="a txt" style="left:962.93px;top:544.00px;font-size:11.80px;color:#333;font-weight:400;">3</div><div class="a txt" style="left:870.42px;top:574.00px;font-size:11.80px;color:#333;font-weight:400;transform:scaleX(0.9341);transform-origin:0 0;">Distance</div><div class="a" style="left:960.2px;top:568.5px;width:119.3px;height:20px;background:#fff;border:1px solid #d0d0d0"></div><svg class="a" style="left:1081.9px;top:577.0px" width="7" height="4" viewBox="0 0 7 4"><path d="M0 0H7L3.5 4Z" fill="#333"/></svg><svg class="a" style="left:964px;top:566px" width="50" height="17" viewBox="0 0 50 17"><path d="M1.6 2Q8 0.5 18 2.5Q34 1.5 48.8 1.2L48.8 13.5Q36 15.8 22 15.5Q10 15 3 15.8Q1.6 9 1.6 2Z" fill="#f5f000"/></svg><div class="a txt" style="left:962.87px;top:574.00px;font-size:11.80px;color:#333;font-weight:400;transform:scaleX(0.8942);transform-origin:0 0;">2 * 20 mm</div><div class="a txt" style="left:870.44px;top:605.00px;font-size:11.80px;color:#333;font-weight:400;transform:scaleX(0.9153);transform-origin:0 0;">Direction Type</div><div class="a" style="left:953.7px;top:596.0px;width:139.3px;height:25.7px;background:#fff;border:1px solid #d6d6d6;border-radius:2px"></div><svg class="a" style="left:957px;top:600.5px" width="16" height="17" viewBox="0 0 16 17"><defs><linearGradient id="og" x1="0" y1="0" x2="1" y2="1"><stop offset="0" stop-color="#f08a50"/><stop offset="0.5" stop-color="#ffc8a0"/><stop offset="1" stop-color="#e8733a"/></linearGradient></defs><path d="M1.7 1L14.4 6.8V15.4L1.7 9.6Z" fill="url(#og)" stroke="#333" stroke-width="0.9"/><path d="M8.6 8.5L2.2 14.2" stroke="#111" stroke-width="1.7"/><path d="M0.6 16L1.6 10.8L5.6 14.6Z" fill="#111"/></svg><div class="a txt" style="left:976.82px;top:604.00px;font-size:11.80px;color:#333;font-weight:400;transform:scaleX(0.9088);transform-origin:0 0;">One Direction</div><svg class="a" style="left:1081.5px;top:607.5px" width="7" height="4" viewBox="0 0 7 4"><path d="M0 0H7L3.5 4Z" fill="#333"/></svg><div class="a" style="left:859px;top:625px;width:246px;height:1px;background:#d6d6d6"></div><svg class="a" style="left:867px;top:637.5px" width="12" height="12" viewBox="0 0 12 12"><circle cx="6" cy="6" r="6" fill="#111"/><rect x="5" y="5" width="2" height="4.5" fill="#fff"/><circle cx="6" cy="3.2" r="1.1" fill="#fff"/></svg><div class="a" style="left:966.3px;top:634.5px;width:59.2px;height:17.5px;background:#e6e6e6;border:1px solid #c2c2c2"></div><div class="a txt" style="left:986.77px;top:639.00px;font-size:11.80px;color:#555;font-weight:400;transform:scaleX(1.0060);transform-origin:0 0;">OK</div><div class="a" style="left:1036.1px;top:634.5px;width:59.3px;height:17.5px;background:#e6e6e6;border:1px solid #c2c2c2"></div><div class="a txt" style="left:1045.87px;top:639.00px;font-size:11.80px;color:#555;font-weight:400;transform:scaleX(1.0696);transform-origin:0 0;">Cancel</div>
<div class="a" style="left:2px;top:1000px;width:300px;height:25px;background:#f0f0f0;border:1px solid #cfcfcf"></div><div class="a txt" style="left:27.11px;top:1006.00px;font-size:11.60px;color:#555;font-weight:400;transform:scaleX(0.8418);transform-origin:0 0;">COMMENTS</div><svg class="a" style="left:280px;top:1007px" width="10" height="10" viewBox="0 0 10 10"><circle cx="5" cy="5" r="4.8" fill="#222"/><path d="M5 2.3V7.7M2.3 5H7.7" stroke="#fff" stroke-width="1.5"/></svg><div class="a" style="left:297px;top:1007px;width:1px;height:11px;background:#666"></div><div class="a" style="left:299px;top:1009px;width:1px;height:7px;background:#777"></div><div class="a" style="left:428.6px;top:1001px;width:252.4px;height:24px;background:#f0f0f0"></div><svg class="a" style="left:431px;top:1004px" width="17" height="17" viewBox="0 0 17 17"><path d="M8.5 2V16" stroke="#333" stroke-width="1.6"/><path d="M5.5 5L8.5 1L11.5 5Z" fill="#333"/><ellipse cx="8.5" cy="10" rx="7" ry="3" fill="none" stroke="#333" stroke-width="1.4"/><path d="M1 11L4 8.5L4 13.5Z" fill="#333"/></svg><svg class="a" style="left:452.5px;top:1010.5px" width="6" height="4" viewBox="0 0 6 4"><path d="M0 0H6L3 4Z" fill="#333"/></svg><svg class="a" style="left:464px;top:1005px" width="16" height="15" viewBox="0 0 16 15"><rect x="0.8" y="5" width="14.4" height="9.2" fill="#f4f4f4" stroke="#444" stroke-width="1.3"/><rect x="4" y="8" width="8" height="3.5" fill="#9aa"/><path d="M3 4L6 1M9 4L12 1" stroke="#444" stroke-width="1.2"/></svg><svg class="a" style="left:489.5px;top:1004px" width="16" height="17" viewBox="0 0 16 17"><path d="M4 9V4Q4 2.5 5 2.5Q6 2.5 6 4V8M6 7V2Q6 0.8 7 0.8Q8 0.8 8 2V7M8 7V2.5Q8 1.5 9 1.5Q10 1.5 10 2.5V8M10 8V4.5Q10 3.5 11 3.5Q12 3.5 12 4.5V10Q12 16 7 16Q4 16 2 12L0.8 9Q0.5 7.8 1.5 7.8Q2.5 7.8 4 10" fill="#f4f4f4" stroke="#444" stroke-width="1.1"/></svg><svg class="a" style="left:515px;top:1004px" width="18" height="17" viewBox="0 0 18 17"><circle cx="6.5" cy="9" r="5.2" fill="#d6e6ee" stroke="#444" stroke-width="1.4"/><path d="M10.2 12.7L14 16.3" stroke="#333" stroke-width="2.2"/><path d="M14 1V6M11.5 3.5H16.5" stroke="#444" stroke-width="1.2"/></svg><svg class="a" style="left:542px;top:1004px" width="17" height="17" viewBox="0 0 17 17"><rect x="0.5" y="0.5" width="15" height="15" fill="none" stroke="#555" stroke-width="1" stroke-dasharray="1.5 1.5"/><circle cx="7" cy="7" r="5.2" fill="#d6e6ee" stroke="#444" stroke-width="1.4"/><path d="M10.7 10.7L15.5 15.5" stroke="#333" stroke-width="2.4"/></svg><svg class="a" style="left:562.5px;top:1010.5px" width="6" height="4" viewBox="0 0 6 4"><path d="M0 0H6L3 4Z" fill="#333"/></svg><svg class="a" style="left:583px;top:1005px" width="17" height="16" viewBox="0 0 17 16"><rect x="0.8" y="0.8" width="15.4" height="10.5" fill="#a4c2e4" stroke="#444" stroke-width="1.4"/><path d="M8.5 11.5V14M4.5 14.5H12.5" stroke="#444" stroke-width="1.5"/></svg><svg class="a" style="left:601.5px;top:1010.5px" width="6" height="4" viewBox="0 0 6 4"><path d="M0 0H6L3 4Z" fill="#333"/></svg><svg class="a" style="left:614px;top:1005px" width="16" height="16" viewBox="0 0 16 16"><rect x="0" y="0" width="16" height="16" fill="#c8ccd8"/><path d="M0.5 0.5V15.5" stroke="#555" stroke-width="0.9"/><path d="M3.5 0.5V15.5" stroke="#555" stroke-width="0.9"/><path d="M6.5 0.5V15.5" stroke="#555" stroke-width="0.9"/><path d="M9.5 0.5V15.5" stroke="#555" stroke-width="0.9"/><path d="M12.5 0.5V15.5" stroke="#555" stroke-width="0.9"/><path d="M15.5 0.5V15.5" stroke="#555" stroke-width="0.9"/><path d="M0.5 0.5H15.5" stroke="#555" stroke-width="0.9"/><path d="M0.5 3.5H15.5" stroke="#555" stroke-width="0.9"/><path d="M0.5 6.5H15.5" stroke="#555" stroke-width="0.9"/><path d="M0.5 9.5H15.5" stroke="#555" stroke-width="0.9"/><path d="M0.5 12.5H15.5" stroke="#555" stroke-width="0.9"/><path d="M0.5 15.5H15.5" stroke="#555" stroke-width="0.9"/></svg><svg class="a" style="left:632.5px;top:1010.5px" width="6" height="4" viewBox="0 0 6 4"><path d="M0 0H6L3 4Z" fill="#333"/></svg><svg class="a" style="left:645px;top:1005px" width="16" height="16" viewBox="0 0 16 16"><rect x="0.8" y="0.8" width="6.2" height="6.2" fill="#a4c2e4" stroke="#3a5a9a" stroke-width="1.3"/><rect x="9" y="0.8" width="6.2" height="6.2" fill="#a4c2e4" stroke="#3a5a9a" stroke-width="1.3"/><rect x="0.8" y="9" width="6.2" height="6.2" fill="#a4c2e4" stroke="#3a5a9a" stroke-width="1.3"/><rect x="9" y="9" width="6.2" height="6.2" fill="#a4c2e4" stroke="#3a5a9a" stroke-width="1.3"/></svg><svg class="a" style="left:663.5px;top:1010.5px" width="6" height="4" viewBox="0 0 6 4"><path d="M0 0H6L3 4Z" fill="#333"/></svg><div class="a txt" style="left:970.54px;top:1008.00px;font-size:11.80px;color:#333;font-weight:700;">Multiple selections</div><div class="a" style="left:0;top:1029px;width:1105px;height:50px;background:#f0f0f0"></div><div class="a" style="left:0;top:1029px;width:1105px;height:2px;background:#cccccc"></div><div class="a" style="left:0;top:1077px;width:1105px;height:1px;background:#8a8a8a"></div><div class="a" style="left:0;top:1078px;width:1105px;height:1px;background:#222"></div><svg class="a" style="left:9px;top:1048px" width="115" height="14" viewBox="0 0 115 14"><rect x="0" y="0.5" width="2" height="13" fill="#444"/><path d="M12 0.5V13.5L2.5 7Z" fill="#444"/><path d="M24 7L31 1V13Z" fill="#444"/><rect x="32.5" y="4" width="2" height="6" fill="#444"/><path d="M50 0.5L61.5 7L50 13.5Z" fill="#444"/><rect x="74" y="4" width="2" height="6" fill="#444"/><path d="M77.5 1V13L85 7Z" fill="#444"/><path d="M100 0.5L109.5 7L100 13.5Z" fill="#444"/><rect x="110" y="0.5" width="2" height="13" fill="#444"/></svg><svg class="a" style="left:143px;top:1036px" width="55" height="37" viewBox="0 0 55 37"><path d="M2 5L4 1M7 5L9 1M12 5L14 1" stroke="#444" stroke-width="1.6"/><path d="M1 12L4.5 9H17V22L13.5 26H1Z" fill="#5aa6e0"/><path d="M1 12H13.5V26M13.5 12L17 9" stroke="#3a86c8" stroke-width="0.8" fill="none"/><path d="M1 12L4.5 9H17L13.5 12Z" fill="#8ccaf4"/><path d="M1.8 34.6H34.2M9.9 34.6V28.8M33.5 34.6V29.5" stroke="#c8c8c8" stroke-width="1.8" fill="none"/><path d="M30 12.5H36M28 14.5V21M30 23H36" stroke="#444" stroke-width="0.9"/><rect x="26.5" y="11" width="3.3" height="3.3" fill="#fff" stroke="#444" stroke-width="0.9"/><rect x="36" y="10.7" width="3.8" height="3.8" fill="#5aa6e0"/><rect x="26.2" y="21.2" width="3.8" height="3.8" fill="#5aa6e0"/><rect x="36" y="21.2" width="3.8" height="3.8" fill="#5aa6e0"/><path d="M39 4H51L46.5 10V35H43.5V10Z" fill="#555"/></svg><svg class="a" style="left:1082.7px;top:1046.4px" width="17" height="17" viewBox="0 0 17 17"><circle cx="8.5" cy="8.5" r="4.2" fill="none" stroke="#8a8a8a" stroke-width="4.2"/><rect x="7" y="0.6" width="3" height="4" fill="#8a8a8a" transform="rotate(0 8.5 8.5)"/><rect x="7" y="0.6" width="3" height="4" fill="#8a8a8a" transform="rotate(45 8.5 8.5)"/><rect x="7" y="0.6" width="3" height="4" fill="#8a8a8a" transform="rotate(90 8.5 8.5)"/><rect x="7" y="0.6" width="3" height="4" fill="#8a8a8a" transform="rotate(135 8.5 8.5)"/><rect x="7" y="0.6" width="3" height="4" fill="#8a8a8a" transform="rotate(180 8.5 8.5)"/><rect x="7" y="0.6" width="3" height="4" fill="#8a8a8a" transform="rotate(225 8.5 8.5)"/><rect x="7" y="0.6" width="3" height="4" fill="#8a8a8a" transform="rotate(270 8.5 8.5)"/><rect x="7" y="0.6" width="3" height="4" fill="#8a8a8a" transform="rotate(315 8.5 8.5)"/></svg>
</body></html>
